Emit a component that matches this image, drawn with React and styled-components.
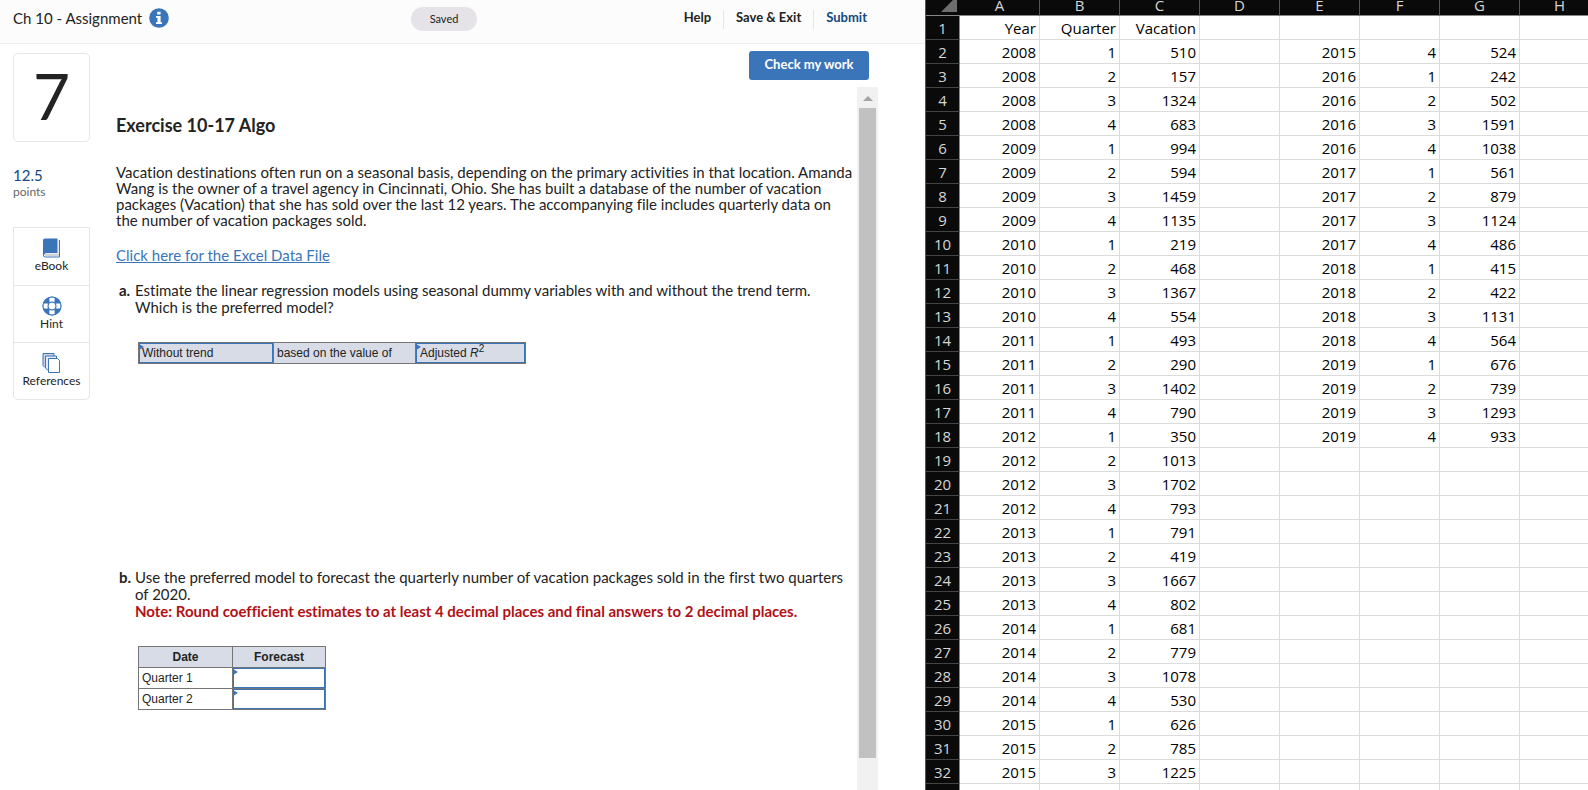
import React from 'react';
import styled, { createGlobalStyle } from 'styled-components';

const colors = {
  blue: '#3a75b9',
  darkBlue: '#14497f',
  body: '#232323',
  muted: '#666666',
  line: '#e6e6e6',
  note: '#b01116',
  cell: '#d8dce7',
  cellBorder: '#757575',
  sheetDark: '#0a0a0a',
  sheetLine: '#dcdcdc',
};

const GlobalStyle = createGlobalStyle`
  * {
    box-sizing: border-box;
  }
  body {
    margin: 0;
    background: #ffffff;
    color: ${colors.body};
    font-family: Lato, sans-serif;
    font-size: 15px;
    font-variant-ligatures: none;
  }
  button, input, select {
    font: inherit;
    color: inherit;
    margin: 0;
  }
`;

const Screen = styled.div`
  display: grid;
  grid-template-columns: minmax(0, 925fr) minmax(0, 663fr);
  height: 100vh;
  overflow: hidden;
`;

const Assignment = styled.div`
  display: flex;
  flex-direction: column;
  min-height: 0;
`;

const Header = styled.header`
  display: grid;
  grid-template-columns: 1fr auto 1fr;
  align-items: start;
  height: 44px;
  flex: none;
  padding: 7px 50px 0 13px;
  background: #fcfcfc;
  border-bottom: 1px solid #eeeeee;
`;

const HeaderTitle = styled.div`
  display: flex;
  align-items: center;
  gap: 7px;
  line-height: 22px;
`;

const SavedPill = styled.span`
  width: 66px;
  border-radius: 12px;
  background: #e5e3e7;
  font-size: 11px;
  line-height: 24px;
  text-align: center;
`;

const HeaderNav = styled.nav`
  display: flex;
  justify-content: flex-end;
  padding-top: 3px;
`;

const NavButton = styled.button`
  height: 19px;
  padding: 0 12px 4px;
  border: 0;
  border-left: 1px solid ${(props) => (props.$first ? 'transparent' : colors.line)};
  background: none;
  color: ${(props) => (props.$submit ? colors.darkBlue : colors.body)};
  font-size: 13px;
  font-weight: bold;
  line-height: 15px;
  white-space: nowrap;

  &:last-child {
    padding-right: 8px;
  }
`;

const Main = styled.div`
  display: flex;
  flex: 1;
  min-height: 0;
  padding: 0 47px 0 13px;
`;

const Rail = styled.aside`
  flex: none;
  width: 77px;
  padding-top: 9px;
`;

const QuestionNumber = styled.div`
  height: 89px;
  border: 1px solid ${colors.line};
  border-radius: 5px;
  font-size: 64px;
  line-height: 84px;
  text-align: center;
`;

const Points = styled.div`
  padding: 24px 0 27px;
  color: ${colors.darkBlue};
  line-height: 18px;
`;

const PointsLabel = styled.div`
  color: ${colors.muted};
  font-size: 12px;
  line-height: 16px;
`;

const Tools = styled.div`
  border: 1px solid ${colors.line};
  border-radius: 0 0 5px 5px;
`;

const ToolButton = styled.button`
  display: flex;
  flex-direction: column;
  align-items: center;
  width: 100%;
  height: 57px;
  padding: 10px 0 0;
  border: 0;
  background: none;
  font-size: 12px;
  line-height: 16px;

  & + & {
    border-top: 1px solid ${colors.line};
  }
`;

const Question = styled.main`
  display: flex;
  flex-direction: column;
  flex: 1;
  min-width: 0;
`;

const ActionRow = styled.div`
  display: flex;
  flex: none;
  justify-content: flex-end;
  height: 43px;
  padding: 7px 9px 0 0;
`;

const CheckButton = styled.button`
  width: 120px;
  height: 29px;
  padding: 0 0 3px;
  border: 0;
  border-radius: 3px;
  background: ${colors.blue};
  color: #ffffff;
  font-size: 13px;
  font-weight: bold;
`;

const ScrollArea = styled.div`
  display: flex;
  flex: 1;
  min-height: 0;
`;

const Content = styled.div`
  flex: 1;
  min-width: 0;
  padding: 27px 0 0 26px;
  overflow: hidden;
  white-space: nowrap;
`;

const ExerciseTitle = styled.h1`
  margin: 0;
  font-size: 18px;
  font-weight: bold;
  line-height: 22px;
`;

const Intro = styled.p`
  margin: 28px 0 18px;
  line-height: 16px;
`;

const FileLink = styled.a`
  color: ${colors.blue};
  line-height: 16px;
  text-decoration: underline;
`;

const Part = styled.section`
  display: grid;
  grid-template-columns: 16px minmax(0, 1fr);
  min-height: ${(props) => (props.$tall ? '287px' : 'auto')};
  padding-left: 3px;
  margin-top: ${(props) => (props.$first ? '18px' : '0')};
  line-height: 17px;
  align-items: start;
`;

const PartBody = styled.div`
  display: flex;
  flex-direction: column;
  align-items: flex-start;
  gap: 26px;
`;

const PartText = styled.p`
  margin: 0;
`;

const Note = styled.strong`
  color: ${colors.note};
`;

const AnswerTable = styled.table`
  margin-left: 3px;
  border-collapse: collapse;
  font-family: "Liberation Sans", Arial, sans-serif;
  font-size: 12px;
  line-height: 17px;

  td, th {
    height: 21px;
    border: 1px solid ${colors.cellBorder};
    padding: 0 3px;
    text-align: left;
  }
  th {
    background: ${colors.cell};
    text-align: center;
  }
`;

const AnswerCell = styled.td`
  && {
    position: relative;
    width: ${(props) => props.$width}px;
    padding: 0;
    background: ${(props) => (props.$filled ? colors.cell : '#ffffff')};
  }
  /* flag in the corner of every answerable cell */
  &::before {
    content: '';
    position: absolute;
    top: 1px;
    left: 0;
    border-left: 5px solid ${colors.blue};
    border-top: 3px solid transparent;
    border-bottom: 3px solid transparent;
  }
`;

const TextCell = styled.td`
  width: ${(props) => props.$width}px;
  background: ${(props) => (props.$filled ? colors.cell : '#ffffff')};
`;

const control = `
  display: block;
  width: 100%;
  height: 20px;
  padding: 0 3px;
  border: 1px solid ${colors.blue};
  border-radius: 0;
  background: transparent;
  text-align: left;
  appearance: none;
  outline: none;
`;

const AnswerSelect = styled.select`
  ${control}
  padding: 0 2px;
`;

const AnswerButton = styled.button`
  ${control}
  line-height: 18px;

  sup {
    font-size: 10px;
    line-height: 0;
  }
`;

const AnswerInput = styled.input`
  ${control}
`;

const ScrollTrack = styled.div`
  display: flex;
  flex: none;
  flex-direction: column;
  align-items: center;
  width: 21px;
  background: #f1f1f1;
`;

const ScrollArrow = styled.div`
  width: 0;
  margin: 9px 0 7px;
  border-left: 5px solid transparent;
  border-right: 5px solid transparent;
  border-bottom: 5px solid #a3a3a3;
`;

const ScrollThumb = styled.div`
  width: 17px;
  flex: 1;
  margin-bottom: 32px;
  background: #c1c1c1;
`;

const Sheet = styled.div`
  overflow: hidden;
  border-left: 1px solid #555555;
  background: #ffffff;
`;

const SheetTable = styled.table`
  width: 674px;
  border-collapse: separate;
  border-spacing: 0;
  table-layout: fixed;
  color: #000000;
  font-family: "Open Sans", sans-serif;
  font-size: 15px;
  line-height: 20px;
`;

const CornerHead = styled.th`
  width: 34px;
  height: 16px;
  padding: 0 3px 3px 0;
  border-bottom: 1px solid #888888;
  background: ${colors.sheetDark};
  vertical-align: bottom;

  svg {
    display: block;
    margin-left: auto;
  }
`;

const ColumnHead = styled.th`
  width: 80px;
  height: 16px;
  padding: 0 0 5px;
  border-right: 1px solid #555555;
  border-bottom: 1px solid #888888;
  background: ${colors.sheetDark};
  color: #d6d6d6;
  font-weight: normal;
  line-height: 10px;
`;

const RowHead = styled.th`
  height: 24px;
  padding: 0;
  border-bottom: 1px solid #444444;
  border-right: 1px solid #888888;
  background: ${colors.sheetDark};
  color: #d6d6d6;
  font-weight: normal;
`;

const SheetCell = styled.td`
  height: 24px;
  padding: 0 3px 0 0;
  border-right: 1px solid ${colors.sheetLine};
  border-bottom: 1px solid ${colors.sheetLine};
  text-align: right;
`;

const InfoIcon = () => (
  <svg width="20" height="20" viewBox="0 0 20 20">
    <circle cx="10" cy="10" r="9.8" fill={colors.blue} />
    <path d="M8.2 3.8h3.4v2.7H8.2zM7 8h4.6v6.3H13V16H7v-1.7h1.5V9.7H7z" fill="#fff" />
  </svg>
);

const BookIcon = () => (
  <svg width="19" height="20" viewBox="0 0 19 20">
    <path d="M3 0.5h12.5v14.5H4.5a2 2 0 0 0-2 1.5H1V2.5a2 2 0 0 1 2-2z" fill={colors.blue} />
    <path d="M4 15.4h12.5v-13.4h1v16H4a1.3 1.3 0 0 1 0-2.6z" fill="#cfd3df" />
    <path d="M17.5 2v17H3.3a2 2 0 0 1-2-2v-1" fill="none" stroke={colors.blue} />
  </svg>
);

const HintIcon = () => (
  <svg width="20" height="20" viewBox="0 0 20 20" fill="none">
    <circle cx="10" cy="10" r="6.5" stroke={colors.blue} strokeWidth="6" />
    <path d="M7.4 1.2h5.2v4.6H7.4zM7.4 14.2h5.2v4.6H7.4zM1.2 7.4h4.6v5.2H1.2zM14.2 7.4h4.6v5.2h-4.6z" fill="#fff" />
    <circle cx="10" cy="10" r="9" stroke={colors.blue} />
    <circle cx="10" cy="10" r="4" stroke={colors.blue} fill="#fff" />
  </svg>
);

const ReferencesIcon = () => (
  <svg width="19" height="20" viewBox="0 0 19 20" stroke={colors.blue} fill="#fff">
    <path d="M1 .5h11v14H3L1 12.5z" fill="#c9d3e6" />
    <path d="M3.5 3h11v14h-9l-2-2z" fill="#e4eaf4" />
    <path d="M6.5 5.5h9l2 2v12h-11z" />
  </svg>
);

const tools = [
  { label: 'eBook', icon: BookIcon },
  { label: 'Hint', icon: HintIcon },
  { label: 'References', icon: ReferencesIcon },
];

const vacations = [
  510, 157, 1324, 683, 994, 594, 1459, 1135, 219, 468, 1367, 554,
  493, 290, 1402, 790, 350, 1013, 1702, 793, 791, 419, 1667, 802,
  681, 779, 1078, 530, 626, 785, 1225, 524, 242, 502, 1591, 1038,
  561, 879, 1124, 486, 415, 422, 1131, 564, 676, 739, 1293, 933,
];

const entries = vacations.map((sold, i) => [2008 + Math.floor(i / 4), (i % 4) + 1, sold]);
const blank = ['', '', ''];

// the last 17 quarters stand beside the first 31
const sheetRows = [['Year', 'Quarter', 'Vacation', '', ...blank, '']];
for (let i = 0; i < 32; i++) {
  const left = i < 31 ? entries[i] : blank;
  const right = entries[i + 31] || blank;
  sheetRows.push([...left, '', ...right, '']);
}

function Spreadsheet() {
  return (
    <Sheet>
      <SheetTable>
        <thead>
          <tr>
            <CornerHead>
              <svg width="16" height="12" viewBox="0 4 16 12">
                <path d="M16 0v16H0z" fill="#6e6e6e" />
              </svg>
            </CornerHead>
            {'ABCDEFGH'.split('').map((letter) => (
              <ColumnHead key={letter} scope="col">{letter}</ColumnHead>
            ))}
          </tr>
        </thead>
        <tbody>
          {sheetRows.map((row, i) => (
            <tr key={i}>
              <RowHead scope="row">{i < 32 ? i + 1 : ''}</RowHead>
              {row.map((value, j) => (
                <SheetCell key={j}>{value}</SheetCell>
              ))}
            </tr>
          ))}
        </tbody>
      </SheetTable>
    </Sheet>
  );
}

function App() {
  return (
    <Screen>
      <GlobalStyle />
      <Assignment>
        <Header>
          <HeaderTitle>
            Ch 10 - Assignment
            <InfoIcon />
          </HeaderTitle>
          <SavedPill>Saved</SavedPill>
          <HeaderNav>
            <NavButton type="button" $first>Help</NavButton>
            <NavButton type="button">Save &amp; Exit</NavButton>
            <NavButton type="button" $submit>Submit</NavButton>
          </HeaderNav>
        </Header>
        <Main>
          <Rail>
            <QuestionNumber>7</QuestionNumber>
            <Points>
              12.5
              <PointsLabel>points</PointsLabel>
            </Points>
            <Tools>
              {tools.map(({ label, icon: Icon }) => (
                <ToolButton key={label} type="button">
                  <Icon />
                  {label}
                </ToolButton>
              ))}
            </Tools>
          </Rail>
          <Question>
            <ActionRow>
              <CheckButton type="button">Check my work</CheckButton>
            </ActionRow>
            <ScrollArea>
              <Content>
                <ExerciseTitle>Exercise 10-17 Algo</ExerciseTitle>
                <Intro>
                  Vacation destinations often run on a seasonal basis, depending on the primary activities in that location. Amanda<br />
                  Wang is the owner of a travel agency in Cincinnati, Ohio. She has built a database of the number of vacation<br />
                  packages (Vacation) that she has sold over the last 12 years. The accompanying file includes quarterly data on<br />
                  the number of vacation packages sold.
                </Intro>
                <FileLink href="#data">Click here for the Excel Data File</FileLink>
                <Part $first $tall>
                  <strong>a.</strong>
                  <PartBody>
                    <PartText>
                      Estimate the linear regression models using seasonal dummy variables with and without the trend term.<br />
                      Which is the preferred model?
                    </PartText>
                    <AnswerTable>
                      <tbody>
                        <tr>
                          <AnswerCell $width={135} $filled>
                            <AnswerSelect aria-label="Preferred model" defaultValue="without">
                              <option value="without">Without trend</option>
                              <option value="with">With trend</option>
                            </AnswerSelect>
                          </AnswerCell>
                          <TextCell $width={142} $filled>based on the value of</TextCell>
                          <AnswerCell $width={110} $filled>
                            <AnswerButton type="button" aria-haspopup="listbox">
                              Adjusted <i>R</i><sup>2</sup>
                            </AnswerButton>
                          </AnswerCell>
                        </tr>
                      </tbody>
                    </AnswerTable>
                  </PartBody>
                </Part>
                <Part>
                  <strong>b.</strong>
                  <PartBody>
                    <PartText>
                      Use the preferred model to forecast the quarterly number of vacation packages sold in the first two quarters<br />
                      of 2020.<br />
                      <Note>Note: Round coefficient estimates to at least 4 decimal places and final answers to 2 decimal places.</Note>
                    </PartText>
                    <AnswerTable>
                      <thead>
                        <tr>
                          <th scope="col">Date</th>
                          <th scope="col">Forecast</th>
                        </tr>
                      </thead>
                      <tbody>
                        {[1, 2].map((quarter) => (
                          <tr key={quarter}>
                            <TextCell $width={94}>
                              <label htmlFor={`quarter-${quarter}`}>Quarter {quarter}</label>
                            </TextCell>
                            <AnswerCell $width={93}>
                              <AnswerInput id={`quarter-${quarter}`} />
                            </AnswerCell>
                          </tr>
                        ))}
                      </tbody>
                    </AnswerTable>
                  </PartBody>
                </Part>
              </Content>
              <ScrollTrack>
                <ScrollArrow />
                <ScrollThumb />
              </ScrollTrack>
            </ScrollArea>
          </Question>
        </Main>
      </Assignment>
      <Spreadsheet />
    </Screen>
  );
}

export default App;
